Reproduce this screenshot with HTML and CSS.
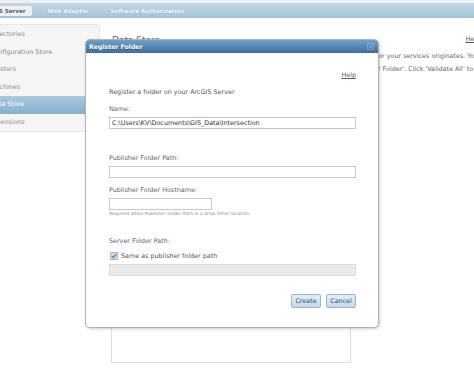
FILE: index.html
```html
<!DOCTYPE html>
<html lang="en">
<head>
    <meta charset="UTF-8">
    <title>ArcGIS Server Manager - Data Store</title>
    <link rel="stylesheet" href="styles.css">
</head>
<body>
    <div class="page">
        <div class="topbar">
            <span class="tab tab-active">GIS Server</span>
            <span class="tab">Web Adaptor</span>
            <span class="tab">Software Authorization</span>
        </div>

        <div class="content">
            <ul class="sidebar">
                <li>Directories</li>
                <li>Configuration Store</li>
                <li>Clusters</li>
                <li>Machines</li>
                <li class="selected">Data Store</li>
                <li>Extensions</li>
            </ul>

            <div class="main">
                <div class="main-header">
                    <h1 class="main-title">Data Store</h1>
                    <a class="help-link main-help">Help</a>
                </div>
                <p class="intro-text">
                    Use this page to register the shared folders and databases where the source data for your services originates. You can<br>
                    can then publish many services from them. To add a new data folder, click 'Register Folder'. Click 'Validate All' to
                </p>
                <div class="folder-list"></div>
            </div>
        </div>
    </div>

    <div class="dialog">
        <div class="dialog-header">
            <span class="dialog-title">Register Folder</span>
            <span class="dialog-close">&times;</span>
        </div>
        <div class="dialog-body">
            <div class="dialog-help"><a class="help-link">Help</a></div>
            <div class="dialog-intro">Register a folder on your ArcGIS Server</div>

            <div class="field-label label-name">Name:</div>
            <div class="text-input">C:\Users\KV\Documents\GIS_Data\Intersection</div>

            <div class="field-label label-path">Publisher Folder Path:</div>
            <div class="text-input"></div>

            <div class="field-label label-host">Publisher Folder Hostname:</div>
            <div class="text-input input-short"></div>
            <div class="hint">Required when Publisher Folder Path is a drive letter location.</div>

            <div class="field-label label-server">Server Folder Path:</div>
            <div class="check-row">
                <span class="checkbox">
                    <svg width="6" height="6" viewBox="0 0 6 6">
                        <path d="M0.8 3.1 L2.4 4.6 L5.2 1.2" fill="none" stroke="#4d7aa3" stroke-width="1.1"></path>
                    </svg>
                </span>
                <span>Same as publisher folder path</span>
            </div>
            <div class="text-input input-disabled"></div>

            <div class="dialog-buttons">
                <button class="button">Create</button>
                <button class="button">Cancel</button>
            </div>
        </div>
    </div>
</body>
</html>
```

FILE: styles.css
```css
* {
    box-sizing: border-box;
}

body {
    margin: 0;
    width: 474px;
    height: 376px;
    overflow: hidden;
    background: #fff;
    font-family: "DejaVu Sans", Verdana, sans-serif;
    font-size: 6.4px;
    color: #5e5e5e;
}

/* page is scrolled a little to the right */
.page {
    margin-left: -20px;
    width: 520px;
}

.topbar {
    height: 18px;
    border-top: 3px solid #eef1f4;
    background: linear-gradient(#c4d9e9, #a3c2d9);
    display: flex;
    align-items: center;
    gap: 8px;
    padding-left: 5px;
}

.tab {
    padding: 0 7px;
    line-height: 10px;
    font-size: 5.6px;
    font-weight: bold;
    color: #fff;
    text-shadow: 0 0 1px rgba(70, 100, 130, 0.6);
}

.tab-active {
    background: #eef2f5;
    color: #5f5f5f;
    text-shadow: none;
    border-radius: 2px;
}

.content {
    display: flex;
    align-items: flex-start;
    gap: 11px;
    margin-top: 6px;
}

.sidebar {
    width: 120px;
    margin: 0;
    padding: 1px 0 0;
    list-style: none;
    background: #f5f5f5;
    border: 1px solid #e6e6e6;
    border-left: none;
    border-radius: 0 4px 4px 0;
}

.sidebar li {
    height: 17.5px;
    line-height: 17.5px;
    padding-left: 10px;
    color: #8c8c8c;
    white-space: nowrap;
}

.sidebar li.selected {
    background: linear-gradient(#aac9df, #86afcd);
    color: #fff;
}

.main {
    width: 369px;
}

.main-header {
    display: flex;
    justify-content: space-between;
    align-items: flex-start;
    padding-left: 1px;
}

.main-title {
    margin: 11px 0 0;
    font-size: 9px;
    line-height: 11px;
    font-weight: normal;
    color: #666;
}

.main-help {
    margin-top: 11px;
    line-height: 8px;
}

.help-link {
    color: #4c5c70;
    text-decoration: underline;
}

.intro-text {
    margin: 4px 0 0 1px;
    line-height: 12.5px;
    white-space: nowrap;
    color: #666;
}

.folder-list {
    margin-top: 125px;
    width: 240px;
    height: 163px;
    border: 1px solid #dedede;
}

/* modal dialog */
.dialog {
    position: absolute;
    left: 85px;
    top: 39px;
    width: 294px;
    height: 289px;
    background: #fff;
    border: 1px solid #b3b3b3;
    border-radius: 5px;
    box-shadow: 1px 1px 3px rgba(0, 0, 0, 0.2);
    overflow: hidden;
}

.dialog-header {
    height: 14px;
    margin-top: -1px;
    background: linear-gradient(#75a4cc, #3b6f9f);
    display: flex;
    align-items: center;
    justify-content: space-between;
    padding: 0 4px 0 3px;
}

.dialog-title {
    color: #fff;
    font-size: 6.2px;
    font-weight: bold;
    text-shadow: 0 1px 0 rgba(0, 0, 0, 0.3);
}

.dialog-close {
    width: 7px;
    height: 7px;
    border: 1px solid rgba(255, 255, 255, 0.25);
    border-radius: 1px;
    color: rgba(255, 255, 255, 0.45);
    font-size: 6px;
    line-height: 5px;
    text-align: center;
}

.dialog-body {
    padding: 0 22px 0 23px;
    line-height: 8px;
}

.dialog-help {
    margin-top: 18px;
    text-align: right;
}

.dialog-intro {
    margin-top: 9px;
    color: #555;
}

.field-label {
    color: #666;
}

.label-name {
    margin-top: 9px;
}

.label-path {
    margin-top: 25px;
}

.label-host {
    margin-top: 8px;
}

.label-server {
    margin-top: 20px;
}

.text-input {
    margin-top: 4px;
    height: 12px;
    border: 1px solid #c8c8c8;
    padding: 0 2px;
    line-height: 10px;
    color: #333;
    white-space: nowrap;
    overflow: hidden;
}

.input-short {
    width: 103px;
}

.input-disabled {
    background: #ebebeb;
    border-color: #dcdcdc;
}

.hint {
    margin-top: 1px;
    font-size: 4.6px;
    line-height: 6px;
    color: #8a8a8a;
}

.check-row {
    margin-top: 7px;
    display: flex;
    align-items: center;
    gap: 3px;
    color: #555;
}

.checkbox {
    width: 8px;
    height: 8px;
    margin-left: 1px;
    border: 1px solid #a7bbce;
    background: #cddcea;
    display: flex;
    align-items: center;
    justify-content: center;
}

.dialog-buttons {
    margin-top: 18px;
    display: flex;
    justify-content: flex-end;
    gap: 5px;
}

.button {
    width: 30px;
    height: 14px;
    padding: 0;
    border: 1px solid #98b5d0;
    border-radius: 2px;
    background: linear-gradient(#e4eef8, #c4d8eb);
    font-family: inherit;
    font-size: 6.4px;
    color: #3f5166;
}
```
